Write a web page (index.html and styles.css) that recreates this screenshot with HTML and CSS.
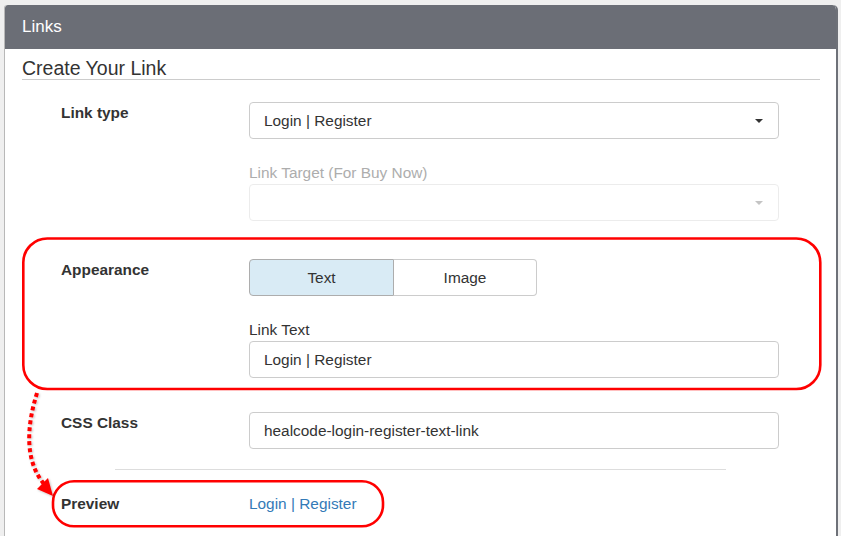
FILE: index.html
```html
<!DOCTYPE html>
<html>
<head>
<meta charset="utf-8">
<link rel="stylesheet" href="styles.css">
</head>
<body>
<div class="panel">
  <div class="panel-heading">Links</div>
  <div class="panel-body">
    <div class="legend">Create Your Link</div>
    <div class="form">
      <div class="row r1">
        <div class="lbl">Link type</div>
        <div class="field">
          <div class="control select">Login | Register<span class="caret"></span></div>
        </div>
      </div>
      <div class="row r2">
        <div class="lbl"></div>
        <div class="field">
          <div class="sublabel muted">Link Target (For Buy Now)</div>
          <div class="control select disabled"><span class="caret"></span></div>
        </div>
      </div>
      <div class="row r3">
        <div class="lbl">Appearance</div>
        <div class="field">
          <div class="btn-group">
            <div class="btn active">Text</div>
            <div class="btn">Image</div>
          </div>
          <div class="sublabel gap">Link Text</div>
          <div class="control">Login | Register</div>
        </div>
      </div>
      <div class="row r4">
        <div class="lbl">CSS Class</div>
        <div class="field">
          <div class="control">healcode-login-register-text-link</div>
        </div>
      </div>
      <div class="divider"></div>
      <div class="row r5">
        <div class="lbl">Preview</div>
        <div class="field">
          <span class="link">Login</span> <span class="link">|</span> <span class="link">Register</span>
        </div>
      </div>
    </div>
  </div>
</div>
<svg class="annot" width="841" height="536" viewBox="0 0 841 536">
  <defs>
    <filter id="sh" x="-10%" y="-10%" width="120%" height="120%">
      <feDropShadow dx="1" dy="1" stdDeviation="0.8" flood-color="#000" flood-opacity="0.25"/>
    </filter>
  </defs>
  <rect x="23.3" y="238.5" width="797" height="150.5" rx="24" ry="24" fill="none" stroke="#ff0000" stroke-width="2.6"/>
  <rect x="53" y="481.2" width="330" height="45" rx="21" ry="21" fill="none" stroke="#ff0000" stroke-width="2.6"/>
  <g filter="url(#sh)">
    <path d="M37 393 C 27 425, 24 460, 44 484" fill="none" stroke="#ff0000" stroke-width="4" stroke-dasharray="4 3"/>
    <polygon points="53,496 37,489 48,478" fill="#ff0000"/>
  </g>
</svg>
</body>
</html>
```
FILE: styles.css
```css
html, body {
  margin: 0;
  padding: 0;
}
body {
  background: #efefef;
  font-family: "Liberation Sans", Arial, sans-serif;
  font-size: 15.4px;
  color: #333;
  width: 841px;
  height: 536px;
  overflow: hidden;
  position: relative;
}
.panel {
  margin: 5px 0 0 4px;
  width: 831px;
  height: 531px;
  overflow: hidden;
  background: #fff;
  border-left: 1px solid #b8b8b8;
  border-right: 2px solid #6e7178;
  border-top-right-radius: 5px;
  border-top-left-radius: 3px;
}
.panel-heading {
  height: 44px;
  line-height: 44px;
  background: #6b6e76;
  color: #fff;
  font-size: 17px;
  padding-left: 17px;
  border-top-right-radius: 4px;
  border-top-left-radius: 3px;
}
.panel-body {
  padding: 8px 16px 0 17px;
}
.legend {
  font-size: 19.5px;
  line-height: 22px;
  color: #333;
  border-bottom: 1px solid #cccccc;
}
.form {
  padding-left: 39px;
}
.row {
  display: grid;
  grid-template-columns: 188px 530px;
}
.r1 { margin-top: 22px; }
.r2 { margin-top: 23px; }
.r3 { margin-top: 38px; }
.r4 { margin-top: 34px; }
.r5 { margin-top: 22.6px; }
.lbl {
  font-weight: bold;
  line-height: 22px;
  color: #333;
}
.sublabel {
  line-height: 22px;
}
.sublabel.gap {
  margin-top: 23px;
}
.muted {
  color: #adadad;
}
.control {
  box-sizing: border-box;
  height: 37px;
  line-height: 35px;
  border: 1px solid #cccccc;
  border-radius: 4px;
  padding: 0 14px;
  color: #333;
  background: #fff;
  position: relative;
}
.select.disabled {
  border-color: #ececec;
}
.caret {
  position: absolute;
  right: 15px;
  top: 16px;
  width: 0;
  height: 0;
  border-left: 4px solid transparent;
  border-right: 4px solid transparent;
  border-top: 4px solid #333;
}
.disabled .caret {
  border-top-color: #c4c4c4;
}
.btn-group {
  display: flex;
  width: 288px;
}
.btn {
  box-sizing: border-box;
  height: 37px;
  line-height: 35px;
  text-align: center;
  border: 1px solid #cccccc;
  background: #fff;
  color: #333;
}
.btn:first-child {
  width: 145px;
  border-radius: 4px 0 0 4px;
}
.btn:last-child {
  width: 143px;
  border-left: none;
  border-radius: 0 4px 4px 0;
}
.btn.active {
  background: #d9ebf5;
  border-color: #adadad;
}
.divider {
  height: 1px;
  background: #dddddd;
  margin: 20px 94px 0 54px;
}
.field {
  line-height: 22px;
}
.link {
  color: #337ab7;
}
.annot {
  position: absolute;
  left: 0;
  top: 0;
  pointer-events: none;
}
```
